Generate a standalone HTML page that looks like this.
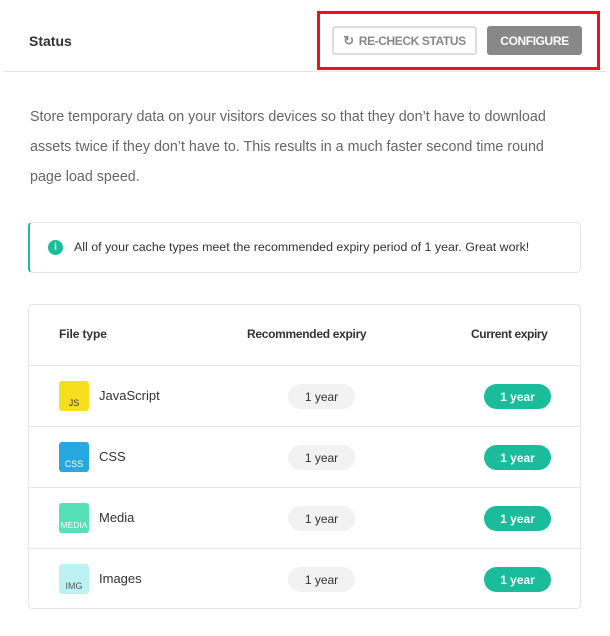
<!DOCTYPE html>
<html><head><style>
body{margin:0;width:610px;height:636px;background:#fff;font-family:"Liberation Sans",sans-serif;color:#333;position:relative;overflow:hidden}
.a{position:absolute}
.hdr{left:3px;top:71px;width:604px;height:1px;background:#e6e6e6}
.red{left:317px;top:11px;width:277px;height:53px;border:3px solid #e8141f}
.btn{top:26px;height:29px;box-sizing:border-box;border-radius:3px;font-size:12px;font-weight:bold;display:flex;align-items:center;justify-content:center;letter-spacing:-0.4px}
.b1{left:332px;width:145px;border:2px solid #ddd;color:#888}
.b2{left:487px;width:95px;background:#888;color:#fff}
.row{left:29px;width:552px;height:61px;border-top:1px solid #e6e6e6}
.ic{left:30px;top:15px;width:30px;height:30px;border-radius:3px;font-size:9px;display:flex;align-items:flex-end;justify-content:center;padding-bottom:3px;box-sizing:border-box}
.nm{left:70px;top:22px;font-size:13px;color:#333}
.p1,.p2{top:18px;width:67px;height:25px;border-radius:13px;font-size:12px;display:flex;align-items:center;justify-content:center}
.p1{left:259px;background:#f2f2f2;color:#333}
.p2{left:455px;background:#1abc9c;color:#fff;font-weight:bold}
.th{top:327px;font-size:12px;font-weight:bold;letter-spacing:-0.1px}
</style></head><body>
<div class="a" style="left:29px;top:33px;font-size:14px;font-weight:bold;color:#333">Status</div>
<div class="a red"></div>
<div class="a btn b1"><span style="font-size:13px;margin-right:5px">&#x21bb;</span>RE-CHECK STATUS</div>
<div class="a btn b2">CONFIGURE</div>
<div class="a hdr"></div>
<div class="a" style="left:30px;top:102px;width:540px;font-size:14.3px;line-height:30px;color:#666">Store temporary data on your visitors devices so that they don’t have to download assets twice if they don’t have to. This results in a much faster second time round page load speed.</div>
<div class="a" style="left:28px;top:222px;width:553px;height:51px;box-sizing:border-box;border:1px solid #e6e6e6;border-left:2px solid #1abc9c;border-radius:4px"></div>
<div class="a" style="left:48px;top:240px;width:15px;height:15px;border-radius:50%;background:#1abc9c;color:#fff;font-size:10px;font-weight:bold;text-align:center;line-height:15px">i</div>
<div class="a" style="left:74px;top:240px;font-size:12.4px;color:#333">All of your cache types meet the recommended expiry period of 1 year. Great work!</div>
<div class="a" style="left:28px;top:304px;width:553px;height:305px;box-sizing:border-box;border:1px solid #e6e6e6;border-radius:4px"></div>
<div class="a th" style="left:59px">File type</div>
<div class="a th" style="left:247px;letter-spacing:-0.3px">Recommended expiry</div>
<div class="a th" style="left:471px;letter-spacing:-0.4px">Current expiry</div>
<div class="a row" style="top:365px"><div class="a ic" style="background:#f7df1e;color:#333">JS</div><div class="a nm">JavaScript</div><div class="a p1">1 year</div><div class="a p2">1 year</div></div>
<div class="a row" style="top:426px"><div class="a ic" style="background:#25a9e0;color:#fff">CSS</div><div class="a nm">CSS</div><div class="a p1">1 year</div><div class="a p2">1 year</div></div>
<div class="a row" style="top:487px"><div class="a ic" style="background:#55e0b8;color:#fff;font-size:8.5px">MEDIA</div><div class="a nm">Media</div><div class="a p1">1 year</div><div class="a p2">1 year</div></div>
<div class="a row" style="top:548px"><div class="a ic" style="background:#bdf2f5;color:#555">IMG</div><div class="a nm">Images</div><div class="a p1">1 year</div><div class="a p2">1 year</div></div>
</body></html>
